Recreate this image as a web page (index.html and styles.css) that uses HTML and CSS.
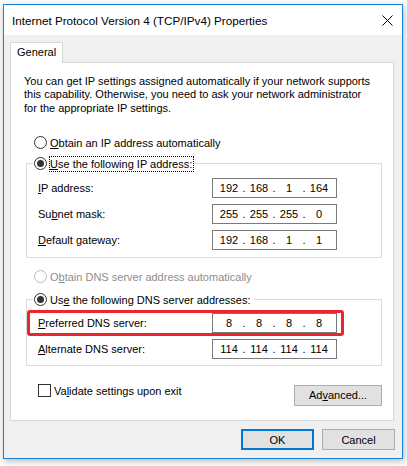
FILE: index.html
```html
<!DOCTYPE html>
<html>
<head>
<meta charset="utf-8">
<title>Internet Protocol Version 4 (TCP/IPv4) Properties</title>
<link rel="stylesheet" href="styles.css">
</head>
<body>
<div class="window">
  <div class="titlebar">
    <span class="title">Internet Protocol Version 4 (TCP/IPv4) Properties</span>
    <svg class="close" width="11" height="11" viewBox="0 0 11 11"><path d="M0.5 0.5L10.5 10.5M10.5 0.5L0.5 10.5" stroke="#000" stroke-width="1" fill="none"/></svg>
  </div>
  <div class="body">
    <div class="tabs"><div class="tab">General</div></div>
    <div class="panel">
      <p class="intro">You can get IP settings assigned automatically if your network supports<br>this capability. Otherwise, you need to ask your network administrator<br>for the appropriate IP settings.</p>
      <div class="option first"><span class="radio"></span><span class="opt-text"><u>O</u>btain an IP address automatically</span></div>
      <fieldset class="group ip-group">
        <legend class="legend"><span class="radio checked"></span><span class="focus"><u>U</u>se the following IP address:</span></legend>
        <div class="field-row"><span class="label"><u>I</u>P address:</span><div class="ipbox"><span>192</span><i>.</i><span>168</span><i>.</i><span>1</span><i>.</i><span>164</span></div></div>
        <div class="field-row"><span class="label">Su<u>b</u>net mask:</span><div class="ipbox"><span>255</span><i>.</i><span>255</span><i>.</i><span>255</span><i>.</i><span>0</span></div></div>
        <div class="field-row"><span class="label"><u>D</u>efault gateway:</span><div class="ipbox"><span>192</span><i>.</i><span>168</span><i>.</i><span>1</span><i>.</i><span>1</span></div></div>
      </fieldset>
      <div class="option dns-auto disabled"><span class="radio"></span><span class="opt-text">O<u>b</u>tain DNS server address automatically</span></div>
      <fieldset class="group dns-group">
        <legend class="legend"><span class="radio checked"></span><span class="nofocus">Us<u>e</u> the following DNS server addresses:</span></legend>
        <div class="field-row highlighted"><span class="label"><u>P</u>referred DNS server:</span><div class="ipbox"><span>8</span><i>.</i><span>8</span><i>.</i><span>8</span><i>.</i><span>8</span></div><span class="mark"></span></div>
        <div class="field-row"><span class="label"><u>A</u>lternate DNS server:</span><div class="ipbox"><span>114</span><i>.</i><span>114</span><i>.</i><span>114</span><i>.</i><span>114</span></div></div>
      </fieldset>
      <div class="bottom-row">
        <div class="check-row"><span class="checkbox"></span><span class="check-text">Va<u>l</u>idate settings upon exit</span></div>
        <div class="button advanced">Ad<u>v</u>anced...</div>
      </div>
    </div>
    <div class="buttons">
      <div class="button default">OK</div>
      <div class="button">Cancel</div>
    </div>
  </div>
</div>
</body>
</html>
```
FILE: styles.css
```css
* { box-sizing: border-box; }
html, body { margin: 0; padding: 0; }
body {
  width: 407px;
  height: 466px;
  overflow: hidden;
  background: #ffffff;
  font-family: "Liberation Sans", Arial, sans-serif;
  font-size: 11px;
  color: #000;
}
u { text-decoration: underline; text-underline-offset: 1px; }

.window {
  margin: 4px 0 0 3px;
  width: 400px;
  height: 455px;
  border: 1px solid #1883d7;
  background: #f0f0f0;
  display: flex;
  flex-direction: column;
  box-shadow: 1px 2px 7px rgba(0, 0, 0, 0.3);
}
.titlebar {
  height: 30px;
  flex: none;
  background: #fff;
  display: flex;
  align-items: center;
  justify-content: space-between;
  padding: 0 9px 0 8px;
}
.title { font-size: 11.7px; }
.close { display: block; }

.body {
  flex: 1;
  padding: 7px 8px 0 6px;
  display: flex;
  flex-direction: column;
}
.tabs {
  display: flex;
  position: relative;
  z-index: 1;
  margin-bottom: -1px;
}
.tab {
  width: 53px;
  height: 21px;
  border: 1px solid #d9d9d9;
  border-bottom: none;
  background: #fff;
  padding-left: 6px;
  line-height: 18px;
}
.panel {
  width: 384px;
  height: 359px;
  border: 1px solid #d9d9d9;
  background: #fff;
  display: flex;
  flex-direction: column;
}
.intro {
  margin: 12px 0 0 13px;
  line-height: 13.33px;
}
.option {
  display: flex;
  align-items: center;
  height: 14px;
  margin-left: 23px;
}
.option.first { margin-top: 21px; }
.option.dns-auto { margin-top: 12px; }
.opt-text { margin-left: 3px; }
.disabled { color: #8d8d8d; }

.radio {
  width: 13px;
  height: 13px;
  border: 1px solid #333;
  border-radius: 50%;
  background: #fff;
  position: relative;
  flex: none;
}
.radio.checked::after {
  content: "";
  position: absolute;
  left: 2px;
  top: 2px;
  width: 7px;
  height: 7px;
  border-radius: 50%;
  background: #333;
}
.disabled .radio { border-color: #bcbcbc; }

.group {
  margin: 0 11px 0 15px;
  padding: 0 11px;
  border: 1px solid #dcdcdc;
  min-width: 0;
}
.ip-group { margin-top: 6px; padding-bottom: 7px; }
.dns-group { margin-top: 8px; padding-bottom: 6px; }
.legend {
  margin-left: -5px;
  padding: 0 1px;
  height: 16px;
  display: flex;
  align-items: center;
}
.focus, .nofocus {
  margin-left: 2px;
  height: 16px;
  line-height: 14px;
  border: 1px dotted #000;
  padding-right: 1px;
}
.nofocus { border-color: transparent; }

.field-row {
  display: grid;
  grid-template-columns: 174px 125px;
  align-items: center;
  height: 20px;
  margin-top: 6px;
  position: relative;
}
.ip-group .field-row:first-of-type { margin-top: 6px; }
.dns-group .field-row:first-of-type { margin-top: 5px; }
.ipbox {
  height: 20px;
  border: 1px solid #7a7a7a;
  background: #fff;
  display: flex;
  align-items: center;
  padding-left: 4px;
  position: relative;
  z-index: 1;
}
.ipbox span { width: 24px; text-align: center; }
.ipbox i { width: 6px; text-align: center; font-style: normal; }
.mark {
  position: absolute;
  left: -11px;
  top: -3px;
  width: 317px;
  height: 26px;
  border: 3px solid #e8262b;
  border-radius: 3px;
}

.bottom-row {
  display: flex;
  justify-content: space-between;
  align-items: flex-start;
  margin: 18px 11px 0 27px;
}
.check-row { display: flex; align-items: center; }
.checkbox {
  width: 13px;
  height: 13px;
  border: 1px solid #333;
  background: #fff;
}
.check-text { margin-left: 3px; padding-top: 1px; }
.button {
  height: 21px;
  border: 1px solid #adadad;
  background: #e1e1e1;
  display: flex;
  align-items: center;
  justify-content: center;
}
.advanced { width: 88px; margin-top: 1px; }
.buttons {
  display: flex;
  justify-content: flex-end;
  gap: 8px;
  margin: 8px -1px 0 0;
}
.buttons .button { width: 73px; }
.button.default { border: 2px solid #0078d7; }
```
